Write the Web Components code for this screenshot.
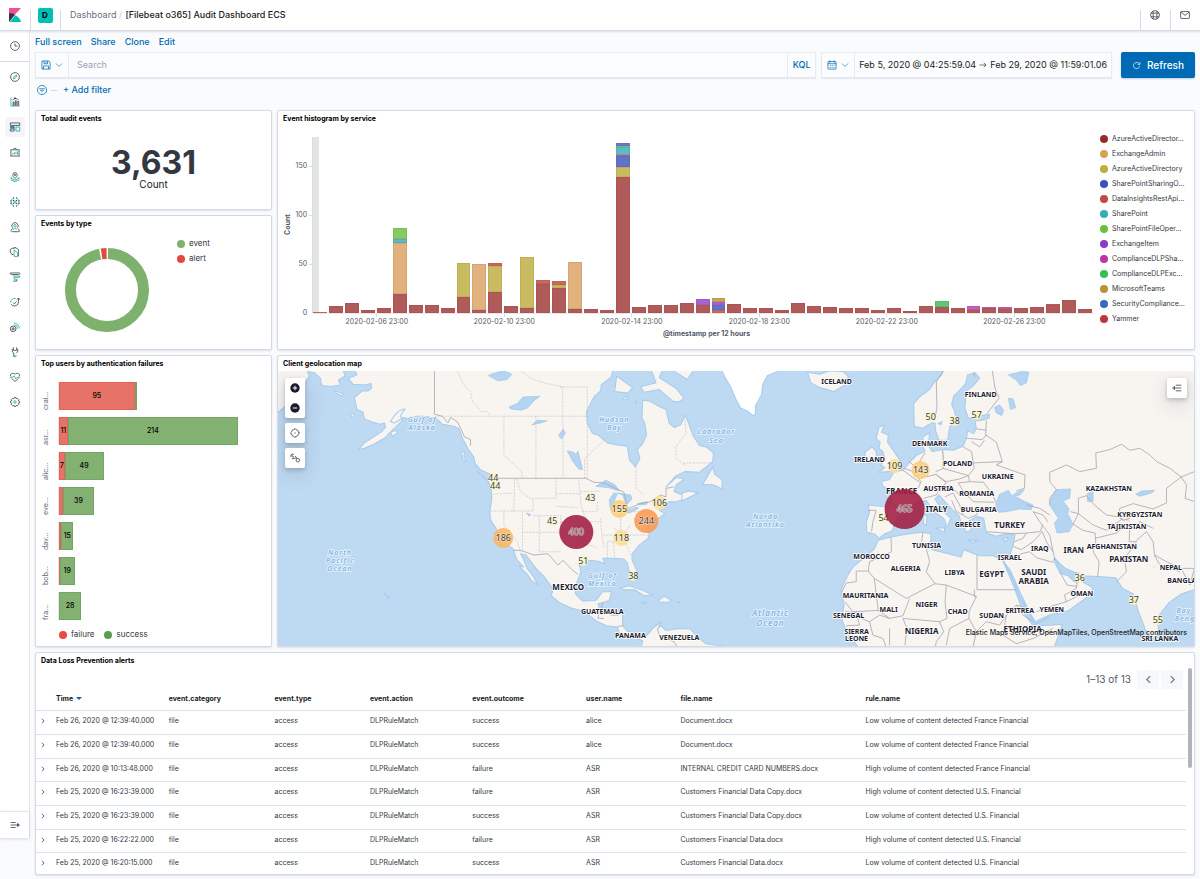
<!DOCTYPE html>
<html lang="en">
<head>
<meta charset="utf-8">
<meta name="viewport" content="width=device-width, initial-scale=1">
<title>[Filebeat o365] Audit Dashboard ECS - Kibana</title>
<style>
  html, body { height: 100%; }
  body {
    margin: 0; font-family: Inter, "Liberation Sans", sans-serif; font-size: 8px; line-height: 12px;
    color: #343741; background: #fafbfd;
    --line: #d3dae6; --link: #006bb4; --ink: #1a1c21;
  }
</style>
</head>
<body>
<kbn-app></kbn-app>
<script>
const define = (name, html, setup) => {
  const tpl = document.createElement('template');
  tpl.innerHTML = html;
  customElements.define(name, class extends HTMLElement {
    connectedCallback() {
      if (this.shadowRoot) return;
      this.attachShadow({ mode: 'open' }).append(tpl.content.cloneNode(true));
      if (setup) setup(this.shadowRoot, this);
    }
  });
};

/* ---------- icons (16 x 16 grid; class "a" marks the teal accent strokes) ---------- */
const ICONS = {
  clock: '<circle cx="8" cy="8" r="7"/><path d="M8 4v4h4"/>',
  discover: '<circle cx="8" cy="8" r="7"/><path class="a" d="M11 5 9.2 9.2 5 11l1.800-4.200z"/>',
  visualize: '<path class="a" d="M1.500.500v14h14"/><path d="M5 14V8h1.500v6M8.500 14V6H10v8M12.500 14V7H14v7M4 5l4-3 3 1 3 2"/><circle cx="8" cy="2" r="1"/>',
  dashboard: '<path d="M.500 1.500h15v4H.500zM.500 8.500h6v-1h-6zM.500 11h6v3.500h-6z"/><path class="a" d="M.500 8h6.500v3H.500M9.500 8h6v6.500h-6z"/>',
  canvas: '<path d="M.500 4.500h15M1.500 5v9.500M14.500 5v9.500M.500 14.500h15M5 4l3-2.500L11 4"/><path class="a" d="M4.500 12V9.500M7 12V8M9.500 12V7.500M12 12V7"/>',
  maps: '<path d="M8 10.500C5.500 8 4.500 6.500 4.500 4.500a3.500 3.500 0 0 1 7 0c0 2-1 3.500-3.500 6z"/><circle cx="8" cy="4.500" r="1.200"/><path class="a" d="M3.500 8.500 1 10l7 3 7-3-2.500-1.500M1 12.500l7 3 7-3"/>',
  ml: '<path class="a" d="M5 2 2 5v6l3 3M11 2l3 3v6l-3 3M5 8h6M8 5v6"/><g class="f"><circle cx="5.500" cy="1.500" r="1"/><circle cx="10.500" cy="1.500" r="1"/><circle cx="5.500" cy="14.500" r="1"/><circle cx="10.500" cy="14.500" r="1"/><circle cx="5.500" cy="5.500" r="1"/><circle cx="10.500" cy="5.500" r="1"/><circle cx="5.500" cy="10.500" r="1"/><circle cx="10.500" cy="10.500" r="1"/><circle cx="1.500" cy="6" r="1"/><circle cx="14.500" cy="6" r="1"/><circle cx="1.500" cy="10" r="1"/><circle cx="14.500" cy="10" r="1"/></g>',
  metrics: '<path d="M2.500 15.500h12a1 1 0 0 0 .500-1.500l-2-3.500M1.500 15c0-2 1-3.500 3-4.500M4 9a5 5 0 1 1 8 0"/><circle class="a" cx="8" cy="6" r="2"/><path class="a" d="M4.500 12c2-2 5-2 7 0"/>',
  logs: '<path d="M5.500 12H3L.500 8V4l3-2h4M5.500 2 8 .500 13.500 4v10.500H12"/><path class="a" d="M6.500 5v10h6V9.500z"/>',
  apm: '<path d="M.500 4V1.500h15V4M2 4h12M5 14.500h6V12"/><path class="a" d="M4.500 6.500h11v2h-9v3h5.500"/>',
  uptime: '<path class="a" d="M1 9a6.500 6.500 0 0 1 8-6.500"/><path d="M1.500 11a6.500 6.500 0 0 0 12-1.500V2M11 4.500l2.500-3 2.500 3"/><path d="m5 9 2 2 3.500-4"/>',
  siem: '<circle cx="5" cy="11" r="4.500"/><path d="M3.500 12.500v-3h3v3h-3"/><path class="a" d="M6 4.500a6 6 0 0 1 6 6M6.500 1.500a9 9 0 0 1 8.500 9M8 8a3 3 0 0 1 1.500 3"/>',
  tools: '<path d="M6 15.500V9.500a3.500 3.500 0 0 1-2.500-3.500V3.500h2v2h5v-2h2V6a3.500 3.500 0 0 1-2.500 3.500M5.500 3V.500M10.500 3V.500"/><path class="a" d="M6.500 12.500v3h3v-3"/>',
  monitor: '<path d="M1 7C0 4 2 2 4.500 2 6.500 2 8 3.500 8 3.500S9.500 2 11.500 2C14 2 16 4 15 7M2.500 10.500 8 15l5.500-4.500"/><path class="a" d="M0 8.500h4.500l2-2.500 2.500 5 2-2.500h5"/>',
  gear: '<path d="M6.500 1h3l.500 1.800 1.800-.800L14 4.200l-.800 1.800 1.800.500v3l-1.800.500.800 1.800-2.200 2.200-1.800-.800-.500 1.800h-3L6 13.200l-1.800.800L2 11.800l.800-1.800L1 9.500v-3L2.800 6 2 4.200 4.200 2l1.800.800z"/><circle class="a" cx="8" cy="8" r="2"/>',
  help: '<circle cx="8" cy="8" r="7"/><path d="M5 1.500v13M11 1.500v13M1.500 5h13M1.500 11h13"/>',
  mail: '<rect x="1" y="2.500" width="14" height="11" rx="1"/><path d="m1.500 3.500 6.500 5 6.500-5"/>',
  save: '<path d="M1.500 1.500h11l2 2v11h-13zM5 1.500V6h5.500V1.500M4 14.500V9.500h8v5M8 3v2"/>',
  down: '<path d="m2 5 6 6 6-6"/>',
  calendar: '<rect x="1.500" y="2.500" width="13" height="12" rx="1"/><path d="M1.500 6h13M4.500.500v4M11.500.500v4"/><path stroke-dasharray="1.500 1.500" d="M4.500 9h8M4.500 12h8"/>',
  refresh: '<path d="M13.500 9a5.500 5.500 0 1 1-2-5.200L14 6M14 2v4h-4"/>',
  filter: '<circle cx="8" cy="8" r="7.300"/><path d="M3.500 6h9M5 8.500h6M7 11h2"/>',
  arrow: '<path d="M1 8h13M9.500 3.500 14 8l-4.500 4.500"/>',
  chevr: '<path d="m5 2 6 6-6 6"/>',
  chevl: '<path d="m11 2-6 6 6 6"/>',
  menuout: '<path d="M1 4h8M1 8h14M1 12h8M12 5.500 15 8l-3 2.500z"/>',
  menuin: '<path d="M6 3.500h9M4 8h11M6 12.500h9M4 5.500 1 8l3 2.500z"/>',
  plus: '<circle class="d" cx="8" cy="8" r="7.500"/><path class="w" d="M8 4.500v7M4.500 8h7"/>',
  minus: '<circle class="d" cx="8" cy="8" r="7.500"/><path class="w" d="M4.500 8h7"/>',
  locate: '<circle cx="8" cy="8" r="6" stroke-dasharray="7.400 2" stroke-dashoffset="-1"/><path d="M8 0v2.500M8 13.500V16M0 8h2.500M13.500 8H16M8 7v2"/>',
  wrench: '<path d="M5 1.500a3.500 3.500 0 0 0-4 4L3 4.500l2 .500.500 2-2 2c2 .500 4 0 5-1.500l2 2.500M5 1.500 4.500 3.500M8 5l3.500 3"/><circle cx="12.500" cy="11.500" r="2.800"/>'
};
customElements.define('kbn-icon', class extends HTMLElement {
  connectedCallback() {
    if (this.shadowRoot) return;
    this.attachShadow({ mode: 'open' }).innerHTML = `<style>
      :host { display: inline-flex; width: 10px; height: 10px; flex: none; }
      svg { width: 100%; height: 100%; fill: none; stroke: currentColor; stroke-width: var(--w, 1.200); overflow: visible; }
      .a { stroke: #12a39a; } .f { fill: currentColor; stroke: none; }
      .d { fill: #1a1c2b; stroke: none; } .w { stroke: #fff; stroke-width: 1.600; }
    </style><svg viewBox="0 0 16 16" aria-hidden="true">${ICONS[this.getAttribute('name')]}</svg>`;
  }
});

/* ---------- header ---------- */
define('kbn-header', `<style>
  :host { display: flex; height: 30px; align-items: stretch; background: #fff; box-shadow: 0 1px 0 var(--line), 0 2px 2px rgba(152,162,179,.3);
    position: relative; z-index: 2; }
  a { color: #69707d; text-decoration: none; }
  .logo { width: 30px; display: flex; align-items: center; justify-content: center; }
  .logo svg { width: 12px; height: 14px; }
  .cell { width: 30px; display: flex; align-items: center; justify-content: center; position: relative; box-sizing: border-box;
    background: linear-gradient(var(--line), var(--line)) left bottom / 1px 20px no-repeat; color: #343741; border: 0; padding: 0; }
  .space { width: 15px; height: 15px; border-radius: 2px; background-color: #00bfb3; color: #000; font: 700 8px/15px Inter, sans-serif; text-align: center; }
  nav { flex: 1; display: flex; align-items: center; gap: 4px; padding-left: 10px; font-size: 9px;
    background: linear-gradient(var(--line), var(--line)) left bottom / 1px 20px no-repeat; }
  i { width: 1px; height: 8px; background: var(--line); transform: rotate(15deg); }
  b { font-weight: 500; color: var(--ink); }
</style>
<a class="logo" href="#" aria-label="Kibana home"><svg viewBox="0 0 12 14"><path fill="#f04e98" d="M0 0h12L0 13z"/><path fill="#343741" d="M0 5c2.500 0 4.500.700 6 1.800L0 14z"/><path fill="#00bfb3" d="M6.500 7.200C9.500 9 11.500 11 12 14H.600z"/></svg></a>
<button class="cell" type="button" aria-label="Spaces"><span class="space">D</span></button>
<nav aria-label="Breadcrumb"><a href="#">Dashboard</a><i></i><b>[Filebeat o365] Audit Dashboard ECS</b></nav>
<button class="cell" type="button" aria-label="Help"><kbn-icon name="help"></kbn-icon></button>
<button class="cell" type="button" aria-label="Newsfeed"><kbn-icon name="mail"></kbn-icon></button>`);

/* ---------- side navigation ---------- */
define('kbn-nav', `<style>
  :host { display: flex; flex-direction: column; width: 30px; box-sizing: border-box; background: #fff; border-right: 1px solid #e3e8f0; color: #343741; margin-bottom: 41px; }
  .recent { height: 31px; border-bottom: 1px solid var(--line); display: flex; align-items: center; justify-content: center; }
  ul { list-style: none; margin: 0; padding: 5px 4px 0 5px; display: grid; gap: 5px; }
  a { color: inherit; display: flex; height: 20px; align-items: center; justify-content: center; border-radius: 2px; }
  a[aria-current] { background: #f3f5f9; }
  button { margin-top: auto; height: 27px; border: 0; border-top: 1px solid #e3e8f0; background: #fff; box-shadow: 0 1px 3px rgba(152,162,179,.400); color: #343741; padding: 0; }
</style>
<div class="recent"><a href="#" aria-label="Recently viewed"><kbn-icon name="clock"></kbn-icon></a></div>
<ul></ul>
<button type="button" aria-label="Expand navigation"><kbn-icon name="menuout"></kbn-icon></button>`, root => {
  root.querySelector('ul').innerHTML = ['discover', 'visualize', 'dashboard', 'canvas', 'maps', 'ml', 'metrics', 'logs', 'apm', 'uptime', 'siem', 'tools', 'monitor', 'gear']
    .map(n => `<li><a href="#" aria-label="${n}"${n === 'dashboard' ? ' aria-current="page"' : ''}><kbn-icon name="${n}"></kbn-icon></a></li>`).join('');
});

/* ---------- top menu, query bar, filters ---------- */
define('kbn-query-bar', `<style>
  :host { display: block; font-size: 9px; color: var(--ink); }
  a { color: var(--link); text-decoration: none; font-weight: 500; }
  .menu { display: flex; gap: 9px; height: 20px; align-items: center; padding-top: 2px; }
  .bar { display: flex; height: 26px; }
  .group { display: flex; border: 1px solid #e6eaf1; box-sizing: border-box; background: #fbfcfd; box-shadow: 0 1px 1px rgba(152,162,179,.200); }
  .query { flex: 1; margin-right: 5px; }
  button, input { font: inherit; color: inherit; border: 0; background: none; padding: 0; }
  .pick { width: 33px; box-sizing: border-box; border-right: 1px solid #e6eaf1; color: var(--link); display: flex; align-items: center; justify-content: center; gap: 4px; }
  .pick kbn-icon + kbn-icon { width: 8px; height: 8px; }
  input { flex: 1; min-width: 0; padding: 0 8px; outline: 0; }
  input::placeholder { color: #98a2b3; }
  .kql { width: 28px; border-left: 1px solid #e6eaf1; color: var(--link); font-weight: 500; }
  .range { padding: 0 4px; display: flex; align-items: center; gap: 3px; white-space: nowrap; }
  .range kbn-icon { width: 8px; height: 8px; }
  .go { margin-left: 9px; width: 74px; background: var(--link); color: #fff; border-radius: 2px; font-size: 10px; font-weight: 500; display: flex; align-items: center; justify-content: center; gap: 6px; box-shadow: 0 1px 2px rgba(0,107,180,.300); }
  .go kbn-icon { width: 9px; height: 9px; }
  .filters { display: flex; align-items: center; height: 24px; color: var(--link); gap: 4px; padding-left: 2px; }
  .filters i { width: 6px; height: 1px; background: var(--line); margin-right: 2px; }
</style>
<nav class="menu" aria-label="Dashboard actions"><a href="#">Full screen</a><a href="#">Share</a><a href="#">Clone</a><a href="#">Edit</a></nav>
<div class="bar">
  <div class="group query"><button class="pick" type="button" aria-label="Saved queries"><kbn-icon name="save"></kbn-icon><kbn-icon name="down"></kbn-icon></button>
    <input type="text" placeholder="Search" aria-label="Search"><button class="kql" type="button">KQL</button></div>
  <div class="group"><button class="pick" type="button" aria-label="Quick dates"><kbn-icon name="calendar"></kbn-icon><kbn-icon name="down"></kbn-icon></button>
    <div class="range"><button type="button">Feb 5, 2020 @ 04:25:59.04</button><kbn-icon name="arrow"></kbn-icon><button type="button">Feb 29, 2020 @ 11:59:01.06</button></div></div>
  <button class="go" type="button"><kbn-icon name="refresh"></kbn-icon>Refresh</button>
</div>
<div class="filters"><kbn-icon name="filter"></kbn-icon><i></i><a href="#">+ Add filter</a></div>`);

/* ---------- panel frame ---------- */
define('kbn-panel', `<style>
  :host { display: flex; flex-direction: column; box-sizing: border-box; min-width: 0; background: #fff; border: 1px solid var(--line); border-radius: 2px;
    box-shadow: 0 1px 2px rgba(152,162,179,.300); overflow: hidden; }
  h2 { margin: 0; padding: 0 5px; font-size: 7px; line-height: 15px; font-weight: 700; color: #000; }
  ::slotted(*) { flex: 1; min-height: 0; }
</style><h2></h2><slot></slot>`, (root, el) => { root.querySelector('h2').textContent = el.getAttribute('heading'); });

define('kbn-metric', `<style>
  :host { display: flex; flex-direction: column; align-items: center; justify-content: center; color: #343741; }
  strong { font-size: 32px; line-height: 32px; font-weight: 700; }
  span { font-size: 10px; line-height: 10px; color: #1a1c21; }
</style><strong><slot></slot></strong><span>Count</span>`);

/* ---------- legend ---------- */
customElements.define('kbn-legend', class extends HTMLElement {
  connectedCallback() {
    if (this.shadowRoot) return;
    const items = this.getAttribute('items').split('|').map(s => s.split('='));
    this.attachShadow({ mode: 'open' }).innerHTML = `<style>
      :host { display: block; } ul { list-style: none; margin: 0; padding: 0; display: flex; flex-direction: column; }
      :host([row]) ul { flex-direction: row; gap: 10px; }
      li { display: flex; align-items: center; gap: 4px; line-height: 15px; font-size: var(--legend-size, 7px); white-space: nowrap; }
      i { width: 8px; height: 8px; border-radius: 4px; flex: none; }
    </style><ul>${items.map(([t, c]) => `<li><i style="background:${c}"></i>${t}</li>`).join('')}</ul>`;
  }
});

define('kbn-donut', `<style>
  :host { display: flex; align-items: flex-start; justify-content: flex-start; padding: 5px 0 0 29px; gap: 28px; --legend-size: 8px; }
  svg { width: 84px; height: 84px; margin-top: 12px; fill: none; stroke-width: 11; }
</style>
<svg viewBox="0 0 84 84" role="img" aria-label="Events by type">
  <circle cx="42" cy="42" r="36.500" stroke="#7db16d" pathLength="1000" stroke-dasharray="974 26" transform="rotate(-89 42 42)"/>
  <circle cx="42" cy="42" r="36.500" stroke="#fff" pathLength="1000" stroke-dasharray="34 966" transform="rotate(-101 42 42)"/>
  <circle cx="42" cy="42" r="36.500" stroke="#e2493f" pathLength="1000" stroke-dasharray="22 978" transform="rotate(-98.500 42 42)"/>
</svg>
<kbn-legend items="event=#7db16d|alert=#e2493f"></kbn-legend>`);

/* ---------- histogram ---------- */
define('kbn-histogram', `<style>
  :host { display: grid; grid-template-columns: 12px 19px minmax(0, 1fr) 92px; grid-template-rows: 176px 16px 12px 1fr; padding: 11px 2px 0 4px; color: #535966; font-size: 7px; }
  .yt { writing-mode: vertical-rl; transform: rotate(180deg); text-align: center; font-weight: 700; line-height: 12px; }
  .y { display: grid; grid-template-rows: 29px 49px 49px 49px 0; border-right: 1px solid #d9dce2; text-align: right; }
  .y span { line-height: 0; padding-right: 5px; background: linear-gradient(#d9dce2, #d9dce2) right top / 3px 1px no-repeat; }
  .plot { display: grid; grid-template-columns: repeat(49, minmax(0, 1fr)); align-items: end; margin-right: 6px;
    background: linear-gradient(#e4e4e4, #e4e4e4) left top / 6px 100% no-repeat; }
  .bar { display: flex; flex-direction: column-reverse; margin-right: 2px; }
  .bar i { box-shadow: inset 0 0 0 1px rgba(120,40,40,.100); }
  .x { grid-column: 3; display: grid; grid-template-columns: repeat(49, minmax(0, 1fr)); margin-right: 6px; text-align: center; border-top: 1px solid #e6e8ee; line-height: 16px; }
  .x span { grid-column: span 8; white-space: nowrap; background: linear-gradient(#d9dce2, #d9dce2) center top / 1px 3px no-repeat; }
  .xt { grid-column: 3; text-align: center; font-weight: 700; line-height: 10px; }
  kbn-legend { grid-column: 4; grid-row: 1 / 5; color: #343741; margin-top: -6px; }
</style>
<div class="yt">Count</div><div class="y"><b></b><span>150</span><span>100</span><span>50</span><span>0</span></div>
<div class="plot"></div>
<kbn-legend items="AzureActiveDirector…=#962b2b|ExchangeAdmin=#dba05c|AzureActiveDirectory=#bcae38|SharePointSharingO…=#3a4fc0|DataInsightsRestApi…=#c04a3c|SharePoint=#35acbc|SharePointFileOper…=#6abf3c|ExchangeItem=#8a3bc4|ComplianceDLPSha…=#bb34a4|ComplianceDLPExc…=#37bd55|MicrosoftTeams=#ba9035|SecurityCompliance…=#3768c0|Yammer=#bd3540"></kbn-legend>
<div class="x"><span>2020-02-06 23:00</span><span>2020-02-10 23:00</span><span>2020-02-14 23:00</span><span>2020-02-18 23:00</span><span>2020-02-22 23:00</span><span>2020-02-26 23:00</span></div>
<div class="xt">@timestamp per 12 hours</div>`, root => {
  const C = { a: '#b05b59', o: '#e1b27d', y: '#c9bc60', b: '#6172cb', r: '#cb675b', c: '#5cbac9', g: '#86ca62', p: '#a562d0', m: '#c85db5', e: '#5aca76', t: '#c7a557', s: '#5b80ca', k: '#c95b63' };
  const data = 'r1 a7 a10 a3 a5 a19o53c4g11 a8 a8 a5 a16y35 a3o47 a21y27r3 a7 a5y52 a30r4 a26y3r4 a4o48 a4 a3 a139y10b12r1c8g1s3 a6 a8 a8 a10 a8p6 r3b5p3t4 a9 a5 a5 a3 a10 a7 a6 a5 a5 a3 a5 a2 a7 a6e6 a5 a3m4 a5m1 a4m2 a5 a6 a8k1 a13 a4';
  root.querySelector('.plot').innerHTML = data.split(' ').map(s =>
    `<div class="bar" style="height:${Math.round(s.match(/\d+/g).reduce((t, n) => t + +n, 0) * 176 / 180)}px">${
      [...s.matchAll(/([a-z])(\d+)/g)].map(m => `<i style="flex:${m[2]} 0 0;background:${C[m[1]]}"></i>`).join('')}</div>`).join('');
});

/* ---------- horizontal bars ---------- */
define('kbn-user-bars', `<style>
  :host { display: flex; flex-direction: column; padding: 11px 33px 0 4px; --legend-size: 8px; }
  .row { display: grid; grid-template-columns: 18px minmax(0, 1fr); height: 28px; margin-bottom: 7px; }
  .row span { writing-mode: vertical-rl; transform: rotate(180deg); text-align: left; line-height: 8px; color: #69707d; font-size: 7px; padding-right: 2px; }
  .bars { display: flex; border-left: 1px solid #e6e8ee; }
  .bars b { display: flex; align-items: center; justify-content: center; font-size: 7px; font-weight: 500; color: #000; overflow: visible; min-width: 0; }
  .f { background: #e77368; box-shadow: inset 0 0 0 1px #e2635a; } .s { background: #82b172; box-shadow: inset 0 0 0 1px #74a764; }
  kbn-legend { padding: 0 0 0 19px; }
</style><div id="rows"></div><kbn-legend row items="failure=#e74c43|success=#5a9e4b"></kbn-legend>`, root => {
  const seg = (c, n) => n ? `<b class="${c}" style="width:${(n / 2.250).toFixed(1)}%">${n > 5 ? n : ''}</b>` : '';
  root.querySelector('#rows').innerHTML = [['crai…', 95, 3], ['asr…', 11, 214], ['alic…', 7, 49], ['eve…', 5, 39], ['dav…', 3, 15], ['bob…', 1, 19], ['fra…', 0, 28]]
    .map(([u, f, s]) => `<div class="row"><span>${u}</span><div class="bars">${seg('f', f)}${seg('s', s)}</div></div>`).join('');
});

/* ---------- map ---------- */
define('kbn-map', `<style>
  :host { display: block; position: relative; background: #bed9f2; overflow: hidden; }
  svg.world { position: absolute; inset: 0; width: 100%; height: 100%; font-family: "Noto Sans", sans-serif; }
  .land { fill: #f8f4f0; stroke: #a5cbee; stroke-width: 3; stroke-linejoin: round; }
  .ice { fill: #fff; stroke: #a5cbee; stroke-width: 3; }
  .water { fill: #b4d4f2; stroke: #9cc5eb; stroke-width: 2; }
  .b { fill: none; stroke: #aaa7b4; stroke-width: 2.500; } .st { fill: none; stroke: #cbc6cb; stroke-width: 2; stroke-dasharray: 7 3; }
  .names text { font-weight: 700; font-size: 7px; fill: #1c1c30; stroke: #fff; stroke-width: 1.500; paint-order: stroke; text-anchor: middle; }
  .names .big { font-size: 8px; }
  .seas text { font-style: italic; font-weight: 600; font-size: 7px; letter-spacing: 1px; fill: #7fb3e0; stroke: #e9f3fc; stroke-width: 1.500; paint-order: stroke; text-anchor: middle; }
  .seas .big { font-size: 8px; }
  .pins text { font-size: 9px; fill: #3a3a3a; text-anchor: middle; stroke: rgba(255,255,255,.700); stroke-width: 1; paint-order: stroke; }
  .tools { position: absolute; left: 7px; top: 7px; display: grid; gap: 5px; }
  .tools div, .layers { background: #fff; border-radius: 2px; box-shadow: 0 2px 4px rgba(65,78,101,.300), 0 6px 20px rgba(65,78,101,.200); }
  button { display: flex; align-items: center; justify-content: center; width: 20px; height: 20px; border: 0; padding: 0; background: none; color: #343741; }
  .layers { position: absolute; right: 7px; top: 7px; }
  .credit { position: absolute; right: 7px; bottom: 7px; font-size: 7px; font-weight: 500; color: #1a1c21; }
  .credit a { color: inherit; text-decoration: none; }
</style>
<svg class="world" viewBox="279 371 915 275" preserveAspectRatio="xMidYMid slice" role="img" aria-label="Client geolocation map">
<g transform="translate(278 355) scale(.3333)">
  <path class="land" d="M-9 30V182L20 158 60 112 85 82 96 64 92 50 112 54 130 70 134 92 160 95 190 90 184 75 204 64 196 40z"/>
  <path class="land" d="M222 30 240 60 214 70 228 88 262 90 282 86 284 100 274 108 256 108 232 128 240 164 258 172 262 192 290 203 310 208 322 204 326 216 314 230 290 246 262 264 244 284 262 280 290 268 322 250 345 226 364 208 376 196 370 182 384 162 376 164 366 168 352 182 340 200 352 204 366 196 378 188 396 192 418 184 442 184 476 190 496 208 530 214 546 222 556 250 574 284 590 306 594 326 612 346 636 356 640 372 630 374 612 360 600 350 614 362 634 380 642 400 644 430 638 470 640 494 656 520 676 560 694 572 708 582 718 612 740 636 724 632 752 660 762 676 782 690 768 664 750 640 738 612 730 596 746 600 776 640 800 664 828 702 822 722 846 742 880 758 912 766 936 782 958 798 988 812 1021 816 1024 830 1040 846 1076 850 1096 856 1092 880 1340 880 1332 872 1286 866 1256 842 1240 822 1204 820 1166 826 1150 812 1142 820 1152 800 1126 820 1104 846 1096 836 1072 834 1050 828 1036 812 1036 776 1010 770 974 770 966 762 962 746 996 736 1003 710 976 710 956 736 916 738 894 716 896 690 911 650 906 630 926 616 960 618 984 626 976 610 1010 610 1040 612 1050 624 1056 650 1072 676 1084 672 1078 646 1064 614 1064 598 1084 572 1112 550 1116 536 1108 526 1112 510 1124 498 1150 486 1162 476 1146 466 1152 454 1176 440 1196 440 1232 428 1264 410 1210 418 1190 410 1196 390 1222 372 1196 368 1166 396 1196 362 1222 350 1266 352 1286 336 1306 320 1308 294 1286 276 1266 272 1246 240 1236 212 1224 180 1210 210 1192 218 1176 206 1166 164 1146 155 1116 138 1096 136 1094 190 1102 204 1108 240 1096 266 1080 284 1088 310 1074 336 1056 314 1050 274 1020 270 990 264 962 240 946 236 930 206 928 170 950 126 970 108 972 90 1002 66 1010 30z"/>
  <path class="land" d="M174 108 200 118 196 124 178 116zM340 232 358 226 362 234 346 244zM218 180 230 176 232 186 224 186zM552 292 562 290 560 304 568 320 558 314zM328 722 336 726 333 732zM320 714 326 716 322 718z"/>
  <path class="land" d="M1118 34 1136 84 1090 96 1100 112 1146 104 1188 140 1206 140 1220 130 1196 100 1146 68 1160 34zM1166 34 1230 74 1246 50 1244 34zM1018 64 1066 98 1052 114 1012 110zM1036 132 1050 122 1048 136zM1072 140 1076 136 1078 146z"/>
  <path class="land" d="M1306 336 1312 358 1334 374 1334 402 1310 390 1276 388 1292 362zM1028 700 1056 692 1096 706 1126 720 1100 722 1072 704 1040 704zM1144 736 1160 724 1184 736 1166 742 1146 740zM1092 742 1106 740 1104 746zM1200 740 1208 742 1202 744zM1214 414 1236 408 1262 414 1214 438z"/>
  <path class="water" d="M634 62 648 56 680 48 704 58 690 74 662 78 640 66zM696 156 720 146 738 126 788 124 770 138 750 160 730 166 700 162zM764 210 780 196 810 198 790 204zM844 242 858 222 864 236 852 252zM870 288 890 292 896 300 902 288 916 344 904 342 886 318zM956 394 986 376 1014 390 1026 408 994 398zM996 434 1010 414 1020 416 1012 436 1006 470 1000 464zM1020 414 1060 420 1064 432 1048 450 1036 420zM1044 470 1078 456 1084 460 1056 474zM1080 446 1110 440 1108 448 1086 450zM748 474 760 478 756 484zM650 536 656 540z"/>
  <path class="ice" d="M1326 30 1342 66 1360 96 1376 134 1390 160 1410 168 1426 182 1434 178 1434 152 1452 120 1456 88 1470 62 1500 50 1530 30z"/>
  <path class="st" d="M540 47 560 90 580 110 586 140 612 170 630 170 640 184M480 184H930M730 47 760 70 800 84 856 95 858 370M930 370V96H846M680 184V300L734 350V370M776 184V370M922 370V312L990 246M1076 336V400L1100 420M1222 186 1226 236 1196 274 1196 310 1222 330 1220 324H1306M648 418 710 414M712 372V414L708 470M640 468H768V430H836V372M718 372 730 410 768 436M680 468V510L720 560 730 590M736 468V590M786 482V590M768 482H850V532M736 532H930M850 590H786M836 416H910M836 454 900 458M904 374 912 454 930 500M850 500H900M900 532V560L960 578M910 410 970 408M960 440V470H910M970 490 974 540 980 576M930 500H972M990 610V560H1040M1030 480V540M1010 520 1040 540 1060 510M976 540H1112M1060 600 1042 556M1008 560 1012 606M1060 470H1120M1070 490 1090 510"/>
  <path class="b" d="M472 47V178L496 184 512 204 520 188 540 200 552 224 562 246 580 254 580 272M640 370H926L950 382 980 384 1040 412 1046 440 1050 462 1088 446 1120 440 1150 420 1166 426 1166 400 1190 396M708 586 730 586 770 600 812 596 842 630 858 616 880 640 902 658M966 770 962 790 980 790M976 744 972 760M1000 780 1024 780M1140 820 1146 840 1190 860 1200 876M1022 814 1036 812"/>
</g>
<g transform="translate(820 355) scale(.3333)">
  <path class="land" d="M-36 52 0 58 30 48 70 50 86 64 76 90 44 110 0 98-26 84z"/>
  <path class="land" d="M374 30 366 60 342 84 330 104 300 126 282 146 284 214 310 220 336 204 346 204 348 228 358 256 384 256 390 216 410 196 404 166 396 150 402 124 420 106 438 86 444 60 466 54 480 70 462 92 440 108 436 160 446 190 476 184 510 178 508 190 484 196 466 198 470 220 462 236 444 228 440 250 430 274 400 286 370 284 338 290 326 272 330 234 310 246 310 272 316 290 292 300 272 320 250 346 222 352 210 374 186 380 190 394 216 408 216 440 206 456 146 450 150 472 140 502 142 532 166 538 178 550 196 536 218 528 224 504 244 480 262 456 300 442 320 436 340 468 372 490 380 508 370 524 384 512 394 490 368 466 346 432 358 420 376 440 400 466 418 482 424 500 440 532 456 524 446 500 470 484 492 490 500 534 530 544 558 536 586 540 580 572 570 602 552 620 572 646 596 700 624 760 646 800 690 780 744 768 800 728 820 698 790 682 778 654 742 652 706 610 700 616 720 650 780 662 834 664 888 668 908 700 940 716 956 770 980 832 1000 852 1016 830 1014 786 1048 742 1086 716 1134 700 1134 30z"/>
  <path class="land" d="M176 556 164 582 134 608 100 636 84 662 64 704 74 750 66 790 78 822 96 850 124 886H700L728 808 652 812 640 800 612 760 590 700 566 650 548 614 520 602 480 602 432 584 424 606 386 596 338 584 326 572 334 556 334 536 308 532 268 536 214 546z"/>
  <path class="land" d="M178 216 194 210 186 232 206 240 204 262 222 288 240 314 246 336 210 350 176 352 196 338 184 330 196 310 190 290 178 280 182 262 170 250zM136 292 158 276 170 290 172 318 140 328zM350 520 374 518 376 532zM310 480 322 482 320 512 312 506zM446 556 476 556 460 562zM548 552 566 546 558 560z"/>
  <path class="water" d="M566 60 606 50 628 52 620 84 602 92 590 76zM524 158 540 150 552 166 546 182 530 174zM566 130 580 132 588 158 572 164zM354 206 368 200 364 210zM528 446 540 418 566 406 576 422 596 410 614 404 600 420 586 424 616 440 640 450 634 464 600 462 560 470 536 472zM694 430 710 404 752 402 750 430 730 438 748 462 744 476 760 508 748 530 712 534 704 504 716 490 700 466 690 450zM802 416 820 410 820 438 804 440zM948 418 966 408 1004 406 996 414 960 424zM704 612 738 640 776 656 780 682 762 680 744 662 722 656zM548 614 572 656 600 722 648 806 690 786 640 812 610 772 584 700z"/>
  <path class="st" d="M374 280 368 306 372 336M1000 640 1010 630M900 490 930 500 910 480"/>
  <path class="b" d="M372 48 350 80 352 160 344 196M462 52 466 66M518 48 526 100 538 130 500 178M500 196 498 240 530 262 548 320 530 330 616 360 614 400 590 408M470 222 500 226M440 250 488 254 500 240M456 260 480 276 494 256M430 276 456 290 460 320 464 340 446 362 370 340 372 310 368 286M460 324 548 320M348 350 372 340M350 360 380 380 420 372 446 362 450 380 416 384M270 320 290 340M254 340 280 350 304 380 296 400M302 370 350 358 380 384 362 400 320 410M250 346 300 382M316 294 300 320 308 360M362 400 350 420 312 430M388 390 420 420 450 414M416 384 428 404 460 440 524 442M376 426 400 414 420 450 430 480M396 436 410 470 426 478 446 490 470 480 480 456 510 470M490 380 520 420 528 440M450 380 490 382M216 444 246 470M146 466 170 466 160 500 156 530M620 450 660 460 690 480M640 470 670 480 684 500M500 530 580 536 620 534 662 530 668 510M640 470 660 500 690 540 700 590 706 616M584 560 610 550 620 534M580 574 604 584 640 560 668 530 680 560 700 590M572 610 590 600 630 590 650 608 700 622M760 508 790 526 826 534 828 560 820 590 838 620 834 664M690 450 690 430 710 404 690 380 690 352 740 330 780 350 830 340 828 294 870 284 906 268 930 286 960 280 990 300 1010 320 1050 340 1084 366 1124 350M776 476V430L800 422 824 450 860 480 898 486 900 460 940 446 1000 462 1040 444 1040 400 1084 366M776 476 752 470M760 508 776 476 820 510 860 526 910 490M826 550 890 534 920 510 950 520 960 500 1000 520M930 520 928 560 950 560 914 612 920 650 890 680M950 556 980 530 1000 560 1004 600 1040 620 1084 640 1124 640M1004 600 1020 630 1080 650M1084 640 1110 690 1124 640M910 480 930 490 910 496 898 486M1084 366 1100 390 1096 430 1124 440M214 546 216 590 150 620 146 648 110 648 110 680 80 684 66 712M146 648 164 670 260 730 346 686 380 690 470 724M310 532 306 560 320 580 330 620 320 650 346 686M472 600V704H590M464 704V724L470 724 448 770 448 790 470 830 460 876M164 670 176 766 100 770 76 740M176 766 210 790 250 782 270 730M380 690 376 740 382 790 360 800 250 790 262 820 256 870M360 800 372 830 350 860 346 880M448 790 390 820 380 870M76 770 110 772 120 810 80 812M80 782 110 784M110 784 150 800 180 780 210 790M150 800 160 840 190 850 200 876M210 820 210 870M470 830 500 800 540 810 560 780 590 750 620 760M560 780 550 840 590 866 640 850 700 820M590 750 610 780 640 800M650 770 700 752 740 740 780 720M740 740 734 720 770 700 772 680M720 650 742 690 772 694"/>
</g>
<g class="seas"></g><g class="names"></g><g class="pins"></g>
</svg>
<div class="tools"><div><button type="button" aria-label="Zoom in"><kbn-icon name="plus"></kbn-icon></button><button type="button" aria-label="Zoom out"><kbn-icon name="minus"></kbn-icon></button></div>
<div><button type="button" aria-label="Fit to data"><kbn-icon name="locate"></kbn-icon></button></div><div><button type="button" aria-label="Tools"><kbn-icon name="wrench"></kbn-icon></button></div></div>
<button class="layers" type="button" aria-label="Layers"><kbn-icon name="menuin"></kbn-icon></button>
<div class="credit"><a href="#">Elastic Maps Service</a>, <a href="#">OpenMapTiles</a>, <a href="#">OpenStreetMap contributors</a></div>`, root => {
  const names = [['ICELAND', 837, 381], ['FINLAND', 981, 394], ['DENMARK', 930, 443], ['IRELAND', 870, 459], ['POLAND', 958, 463], ['UKRAINE', 998, 476], ['AUSTRIA', 939, 488], ['FRANCE', 902, 491, 1], ['ROMANIA', 977, 493], ['ITALY', 937, 509, 1], ['BULGARIA', 979, 509], ['GREECE', 968, 524], ['TURKEY', 1010, 525, 1], ['KAZAKHSTAN', 1109, 488], ['KYRGYZSTAN', 1140, 514], ['TAJIKISTAN', 1127, 526], ['AFGHANISTAN', 1112, 546], ['PAKISTAN', 1129, 559, 1], ['IRAN', 1074, 550, 1], ['IRAQ', 1040, 548], ['ISRAEL', 1010, 557], ['TUNISIA', 927, 545], ['MOROCCO', 872, 556], ['ALGERIA', 906, 568], ['LIBYA', 955, 572], ['EGYPT', 992, 574, 1], ['SAUDI', 1034, 572, 1], ['ARABIA', 1034, 581, 1], ['NEPAL', 1171, 567], ['BANGLA', 1182, 580], ['OMAN', 1082, 593], ['MAURITANIA', 866, 595], ['MALI', 889, 609], ['NIGER', 927, 604], ['CHAD', 958, 611], ['SUDAN', 992, 615], ['ERITREA', 1020, 610], ['YEMEN', 1052, 609], ['SENEGAL', 849, 615], ['SIERRA', 857, 631], ['LEONE', 857, 638], ['NIGERIA', 922, 631, 1], ['ETHIOPIA', 1023, 629, 1], ['SRI LANKA', 1160, 638], ['MEXICO', 569, 587, 1], ['GUATEMALA', 603, 611], ['PANAMA', 631, 635], ['VENEZUELA', 680, 637]];
  const seas = [['Gulf of', 423, 419], ['Alaska', 423, 427], ['Hudson', 615, 419], ['Bay', 615, 427], ['Labrador', 717, 431], ['Sea', 717, 440], ['Norda', 766, 516], ['Atlantiko', 766, 524], ['North', 341, 552], ['Pacific', 341, 560], ['Ocean', 341, 568], ['Gulf of', 603, 575], ['Mexico', 603, 583], ['Atlantic', 771, 613, 1], ['Ocean', 771, 623, 1], ['Bay', 1184, 610], ['Beng', 1185, 618]];
  const label = ([t, x, y, big]) => `<text x="${x}" y="${y + 3}"${big ? ' class="big"' : ''}>${t}</text>`;
  root.querySelector('.names').innerHTML = names.map(label).join('');
  root.querySelector('.seas').innerHTML = seas.map(label).join('');
  const Y = '#f8f6b4', A = '#fbe08f', B = '#fcce76', D = '#a11b40';
  root.querySelector('.pins').innerHTML = [[44, 494, 478, 5, Y], [44, 496, 486, 5, Y], [45, 553, 521, 5, Y], [43, 591, 498, 5, Y], [51, 584, 561, 5, Y], [38, 634, 576, 5, Y], [186, 504, 538, 10, '#fdb55e'], [155, 620, 509, 9, B], [106, 660, 503, 7, A], [118, 622, 538, 8, A], [244, 647, 521, 12, '#fb9850'], [400, 577, 532, 17, D], [109, 895, 466, 7, A], [143, 921, 470, 9, B], [54, 884, 518, 5, Y], [465, 905, 509, 20, D], [50, 931, 417, 5, Y], [38, 955, 421, 5, Y], [57, 977, 415, 5, Y], [36, 1080, 578, 5, Y], [37, 1134, 600, 5, Y], [55, 1158, 620, 5, Y]]
    .map(([n, x, y, r, c]) => `<circle cx="${x}" cy="${y}" r="${r}" fill="${c}" fill-opacity=".880"/><text x="${x}" y="${y + 3}"${c === D ? ' fill-opacity=".600"' : ''}>${n}</text>`).join('');
});

/* ---------- saved search table ---------- */
define('kbn-doc-table', `<style>
  :host { display: flex; gap: 2px; padding-right: 2px; position: relative; overflow: hidden; }
  .main { flex: 1; min-width: 0; }
  .pager { display: flex; justify-content: flex-end; align-items: center; gap: 2px; height: 22px; font-size: 10px; color: #535966; padding-right: 3px; }
  .pager span { margin-right: 4px; }
  .pager button { width: 22px; height: 19px; border: 0; border-radius: 2px; background: #f7f8fb; color: #7b828f; padding: 0; display: flex; align-items: center; justify-content: center; }
  .pager kbn-icon { --w: 2.500; width: 9px; height: 9px; }
  table { width: 100%; border-collapse: collapse; table-layout: fixed; font-size: 7px; color: #343741; }
  th, td { padding: 0 4px 2px; text-align: left; white-space: nowrap; border-bottom: 1px solid #dde2eb; line-height: 12px; }
  thead tr { height: 20px; }
  tbody tr { height: 24px; }
  tbody tr:nth-child(3n) { height: 23px; }
  th { font-weight: 700; color: var(--ink); }
  th button, td button { border: 0; padding: 0; background: none; font: inherit; color: inherit; display: flex; align-items: center; gap: 3px; }
  td button { height: 12px; }
  th i { border: 3px solid transparent; border-top-color: var(--link); border-bottom: 0; }
  td kbn-icon { --w: 2; width: 6px; height: 6px; }
  .thumb { width: 4px; height: 100px; background: #aeb3bc; border-radius: 2px; }
</style>
<div class="main">
  <div class="pager"><span>1–13 of 13</span><button type="button" aria-label="Previous page"><kbn-icon name="chevl"></kbn-icon></button><button type="button" aria-label="Next page"><kbn-icon name="chevr"></kbn-icon></button></div>
  <table>
    <colgroup><col style="width:16px"><col style="width:9.8%"><col style="width:9.2%"><col style="width:8.3%"><col style="width:8.9%"><col style="width:9.9%"><col style="width:8.2%"><col style="width:16.1%"><col></colgroup>
    <thead><tr><th aria-label="Expand"></th><th><button type="button">Time <i></i></button></th><th>event.category</th><th>event.type</th><th>event.action</th><th>event.outcome</th><th>user.name</th><th>file.name</th><th>rule.name</th></tr></thead>
    <tbody></tbody>
  </table>
</div><div class="thumb"></div>`, root => {
  root.querySelector('tbody').innerHTML = [
    ['26, 2020 @ 12:39:40.000', 'success', 'alice', 'Document.docx', 'Low volume of content detected France'],
    ['26, 2020 @ 12:39:40.000', 'success', 'alice', 'Document.docx', 'Low volume of content detected France'],
    ['26, 2020 @ 10:13:48.000', 'failure', 'ASR', 'INTERNAL CREDIT CARD NUMBERS.docx', 'High volume of content detected France'],
    ['25, 2020 @ 16:23:39.000', 'failure', 'ASR', 'Customers Financial Data Copy.docx', 'High volume of content detected U.S.'],
    ['25, 2020 @ 16:23:39.000', 'success', 'ASR', 'Customers Financial Data Copy.docx', 'Low volume of content detected U.S.'],
    ['25, 2020 @ 16:22:22.000', 'failure', 'ASR', 'Customers Financial Data.docx', 'High volume of content detected U.S.'],
    ['25, 2020 @ 16:20:15.000', 'success', 'ASR', 'Customers Financial Data.docx', 'Low volume of content detected U.S.']
  ].map(([t, o, u, f, r]) => `<tr><td><button type="button" aria-label="Toggle row details"><kbn-icon name="chevr"></kbn-icon></button></td><td>Feb ${t}</td><td>file</td><td>access</td><td>DLPRuleMatch</td><td>${o}</td><td>${u}</td><td>${f}</td><td>${r} Financial</td></tr>`).join('');
});

/* ---------- page ---------- */
define('kbn-app', `<style>
  :host { display: flex; flex-direction: column; min-height: 100%; }
  .body { flex: 1; display: flex; align-items: stretch; }
  main { flex: 1; min-width: 0; padding: 0 5px 4px; }
  .grid { display: grid; grid-template-columns: minmax(0, 31fr) minmax(0, 120fr); grid-template-rows: 100px 135px 292px 223px; gap: 5px; padding-top: 8px; }
  .tall { grid-row: 1 / 3; grid-column: 2; }
  .wide { grid-column: 1 / 3; }
</style>
<kbn-header></kbn-header>
<div class="body"><kbn-nav></kbn-nav>
<main><kbn-query-bar></kbn-query-bar>
<div class="grid">
  <kbn-panel heading="Total audit events"><kbn-metric>3,631</kbn-metric></kbn-panel>
  <kbn-panel class="tall" heading="Event histogram by service"><kbn-histogram></kbn-histogram></kbn-panel>
  <kbn-panel heading="Events by type"><kbn-donut></kbn-donut></kbn-panel>
  <kbn-panel heading="Top users by authentication failures"><kbn-user-bars></kbn-user-bars></kbn-panel>
  <kbn-panel heading="Client geolocation map"><kbn-map></kbn-map></kbn-panel>
  <kbn-panel class="wide" heading="Data Loss Prevention alerts"><kbn-doc-table></kbn-doc-table></kbn-panel>
</div></main></div>`);
</script>
</body>
</html>
